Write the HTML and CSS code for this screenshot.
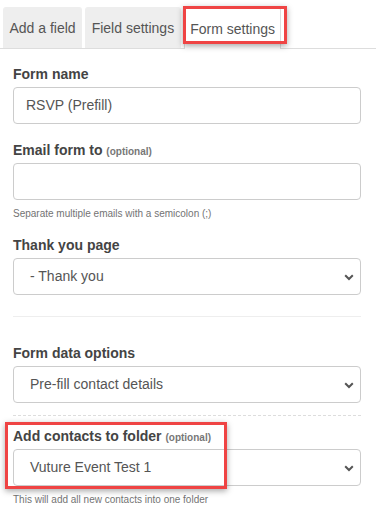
FILE: index.html
```html
<!DOCTYPE html>
<html>
<head>
<meta charset="utf-8">
<link rel="stylesheet" href="styles.css">
</head>
<body>
<div class="tabs">
  <div class="tab">Add a field</div>
  <div class="tab">Field settings</div>
  <div class="tab active">Form settings<span class="mark mark-tab"></span></div>
</div>
<div class="panel">
  <div class="group">
    <label class="lbl">Form name</label>
    <div class="field">RSVP (Prefill)</div>
  </div>
  <div class="group with-help">
    <label class="lbl">Email form to <small>(optional)</small></label>
    <div class="field"></div>
    <p class="help">Separate multiple emails with a semicolon (;)</p>
  </div>
  <div class="group">
    <label class="lbl">Thank you page</label>
    <div class="field sel">- Thank you
      <svg class="chev" width="10" height="7" viewBox="0 0 10 7"><path d="M1.2 1.3 L5 5 L8.8 1.3" fill="none" stroke="#555" stroke-width="2"/></svg>
    </div>
  </div>
  <hr class="rule">
  <div class="group before-dash">
    <label class="lbl">Form data options</label>
    <div class="field sel">Pre-fill contact details
      <svg class="chev" width="10" height="7" viewBox="0 0 10 7"><path d="M1.2 1.3 L5 5 L8.8 1.3" fill="none" stroke="#555" stroke-width="2"/></svg>
    </div>
  </div>
  <hr class="dash">
  <div class="group last">
    <label class="lbl">Add contacts to folder <small>(optional)</small></label>
    <div class="field sel">Vuture Event Test 1
      <svg class="chev" width="10" height="7" viewBox="0 0 10 7"><path d="M1.2 1.3 L5 5 L8.8 1.3" fill="none" stroke="#555" stroke-width="2"/></svg>
    </div>
    <p class="help">This will add all new contacts into one folder</p>
    <span class="mark mark-folder"></span>
  </div>
</div>
</body>
</html>
```

FILE: styles.css
```css
* { box-sizing: border-box; }
body {
  margin: 0;
  background: #fff;
  font-family: "Liberation Sans", Arial, sans-serif;
  color: #555;
  width: 376px;
  height: 506px;
  overflow: hidden;
}
.tabs {
  display: flex;
  gap: 3px;
  padding: 7px 0 0 3px;
  border-bottom: 1px solid #ddd;
}
.tab {
  position: relative;
  height: 41px;
  padding: 0 5.5px;
  display: flex;
  align-items: center;
  font-size: 14px;
  color: #555;
  background: #eee;
  border: 1px solid #eee;
  border-bottom: none;
  border-radius: 3px 3px 0 0;
}
.tab.active {
  background: #fff;
  border-color: #ddd;
  height: 42px;
  margin-bottom: -1px;
}
.mark {
  position: absolute;
  border: 3px solid #ef4444;
  box-shadow: 0 2px 6px rgba(0,0,0,0.35);
  pointer-events: none;
}
.mark-tab {
  left: -2px;
  top: -2px;
  width: 104px;
  height: 38px;
}
.panel {
  padding: 15px 15px 0 13px;
}
.group {
  position: relative;
  margin-bottom: 16px;
}
.group.with-help { margin-bottom: 14px; }
.group.before-dash { margin-bottom: 0; }
.group.last { margin-bottom: 0; }
.lbl {
  display: block;
  font-size: 14px;
  line-height: 20px;
  font-weight: bold;
  color: #444;
  margin-bottom: 3px;
}
.lbl small {
  font-size: 10px;
  line-height: 1;
  color: #777;
}
.field {
  position: relative;
  height: 37px;
  border: 1px solid #ccc;
  border-radius: 4px;
  padding: 0 12px;
  font-size: 14px;
  line-height: 35px;
  color: #555;
  background: #fff;
}
.field.sel {
  padding-left: 16px;
}
.chev {
  position: absolute;
  right: 6px;
  top: 15px;
}
.help {
  margin: 7px 0 0;
  font-size: 10px;
  line-height: 14px;
  color: #737373;
}
.rule {
  margin: 21px 0 26px;
  border: 0;
  border-top: 1px solid #eee;
}
.dash {
  margin: 12px 0 10px;
  border: 0;
  border-top: 1px dashed #ddd;
}
.mark-folder {
  left: -8px;
  top: -4px;
  width: 222px;
  height: 67px;
}
```
